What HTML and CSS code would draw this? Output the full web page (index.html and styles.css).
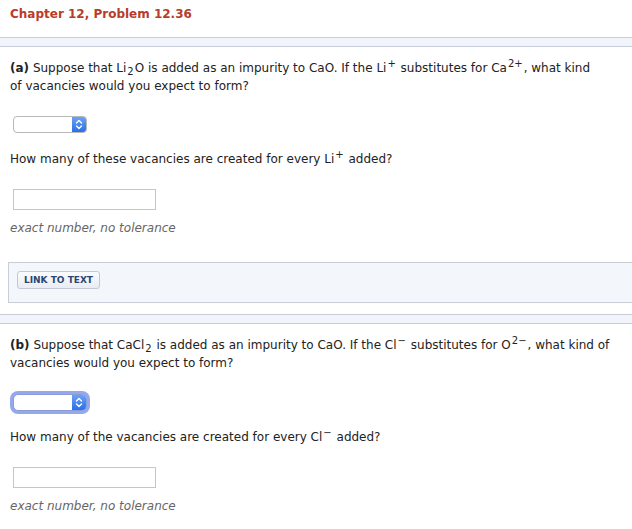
FILE: index.html
```html
<!DOCTYPE html>
<html lang="en">
<head>
    <meta charset="UTF-8">
    <meta name="viewport" content="width=device-width, initial-scale=1.0">
    <title>Chapter 12, Problem 12.36</title>
    <link rel="stylesheet" href="styles.css">
</head>
<body>
    <header class="problem-header">
        <h1>Chapter 12, Problem 12.36</h1>
    </header>
    <div class="band"></div>

    <!-- Part (a) -->
    <div class="part">
        <p class="question"><b>(a)</b> Suppose that Li<sub>2</sub>O is added as an impurity to CaO. If the Li<sup>+</sup> substitutes for Ca<sup>2+</sup>, what kind<br>of vacancies would you expect to form?</p>
        <div class="select">
            <span class="select-arrow">
                <svg width="8" height="11" viewBox="0 0 8 11"><path d="M1.5 4 L4 1.5 L6.5 4 M1.5 7 L4 9.5 L6.5 7" fill="none" stroke="#fff" stroke-width="1.4" stroke-linecap="round" stroke-linejoin="round"/></svg>
            </span>
        </div>
        <p class="question follow">How many of these vacancies are created for every Li<sup>+</sup> added?</p>
        <input class="answer" type="text">
        <p class="hint">exact number, no tolerance</p>
    </div>

    <div class="link-panel">
        <button class="link-btn">LINK TO TEXT</button>
    </div>
    <div class="band band-b"></div>

    <!-- Part (b) -->
    <div class="part">
        <p class="question"><b>(b)</b> Suppose that CaCl<sub>2</sub> is added as an impurity to CaO. If the Cl<sup>&minus;</sup> substitutes for O<sup>2&minus;</sup>, what kind of vacancies would you expect to form?</p>
        <div class="select focused">
            <span class="select-arrow">
                <svg width="8" height="11" viewBox="0 0 8 11"><path d="M1.5 4 L4 1.5 L6.5 4 M1.5 7 L4 9.5 L6.5 7" fill="none" stroke="#fff" stroke-width="1.4" stroke-linecap="round" stroke-linejoin="round"/></svg>
            </span>
        </div>
        <p class="question follow">How many of the vacancies are created for every Cl<sup>&minus;</sup> added?</p>
        <input class="answer" type="text">
        <p class="hint">exact number, no tolerance</p>
    </div>
</body>
</html>
```

FILE: styles.css
```css
body {
    margin: 0;
    padding: 0;
    background: #fff;
    color: #222;
    font-family: "DejaVu Sans", Verdana, sans-serif;
    font-size: 12px;
}
.problem-header {
    padding: 6px 10px 15px;
}
.problem-header h1 {
    margin: 0;
    font-size: 12px;
    line-height: 16px;
    color: #b93c29;
}
.band {
    height: 8px;
    background: #f1f4fa;
    border-top: 1px solid #c9cdd8;
    border-bottom: 1px solid #c9cdd8;
}
.band-b {
    margin-top: 11px;
}
.part {
    padding: 12px 10px 0;
}
.question {
    margin: 0;
    line-height: 18px;
}
.question sup,
.question sub {
    font-size: 10px;
    line-height: 0;
    padding: 0 1px;
}
.question.follow {
    margin-top: 17px;
}
.select {
    width: 72px;
    height: 15px;
    margin: 21px 0 0 3px;
    border: 1px solid #b8b8b8;
    border-radius: 4px;
    background: #fff;
    display: flex;
    justify-content: flex-end;
    overflow: hidden;
}
.select-arrow {
    width: 14px;
    background: linear-gradient(#6aa2f7, #2a6fe8);
    display: flex;
    align-items: center;
    justify-content: center;
}
.select.focused {
    margin-top: 22px;
    border-color: #8a9bd8;
    box-shadow: 0 0 0 3px #94a8ea;
    border-radius: 5px;
}
.answer {
    display: block;
    box-sizing: border-box;
    width: 143px;
    height: 21px;
    margin: 21px 0 0 3px;
    border: 1px solid #c6c6c6;
    padding: 0 3px;
    font: inherit;
}
.hint {
    margin: 9px 0 0;
    line-height: 18px;
    font-style: italic;
    color: #666;
}
.link-panel {
    margin: 25px 0 0 8px;
    padding: 8px 8px 13px;
    background: #f3f7fc;
    border: 1px solid #c9cdd8;
    border-right: none;
}
.link-btn {
    display: block;
    height: 18px;
    padding: 0 6px;
    font-family: "DejaVu Sans", Verdana, sans-serif;
    font-size: 9px;
    font-weight: bold;
    color: #2a4674;
    background: linear-gradient(#fafbfd, #e9edf4);
    border: 1px solid #c3c9d4;
    border-radius: 3px;
}
```
